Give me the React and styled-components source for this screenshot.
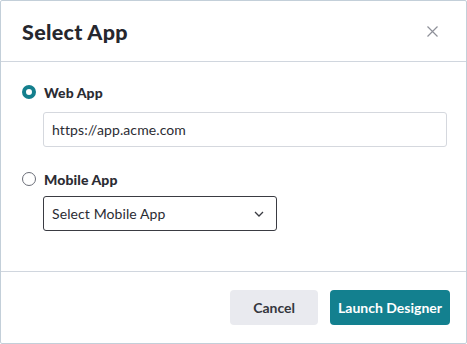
import React from "react";
import styled, { createGlobalStyle } from "styled-components";

const Global = createGlobalStyle`
  html, body { margin: 0; padding: 0; background: #fff; }
  body { font-family: Lato, "Open Sans", Arial, sans-serif; color: #2b2c33; }
  * { box-sizing: border-box; }
`;

const Modal = styled.div`
  width: 467px;
  height: 344px;
  border: 1px solid #c3cfd9;
  border-radius: 2px;
  background: #fff;
  display: flex;
  flex-direction: column;
`;

const Header = styled.div`
  height: 61px;
  display: flex;
  align-items: center;
  justify-content: space-between;
  padding: 0 28px 0 21px;
  border-bottom: 1px solid #d0d6de;
  flex-shrink: 0;
`;

const Title = styled.h1`
  margin: 0;
  font-size: 21.5px;
  font-weight: 900;
  color: #26272e;
  letter-spacing: 0.3px;
  padding-top: 1px;
`;

const CloseBtn = styled.button`
  border: 0;
  background: none;
  padding: 0;
  width: 11px;
  height: 11px;
  display: flex;
  cursor: pointer;
`;

const Body = styled.div`
  flex: 1;
  padding: 21px 20px 0 21px;
  display: flex;
  flex-direction: column;
`;

const Option = styled.div`
  display: flex;
  flex-direction: column;
  margin-bottom: ${(p) => p.$mb || 0}px;
`;

const RadioRow = styled.label`
  display: flex;
  align-items: center;
  gap: 8px;
  height: 18px;
  cursor: pointer;
`;

const Radio = styled.span`
  width: 14px;
  height: 14px;
  border-radius: 50%;
  flex-shrink: 0;
  border: ${(p) => (p.$checked ? "4px solid #147f8d" : "1px solid #6b6e78")};
  background: #fff;
`;

const Label = styled.span`
  font-size: 14px;
  font-weight: 900;
  letter-spacing: 0.1px;
  color: #2b2c33;
`;

const Field = styled.div`
  margin: ${(p) => p.$mt}px 0 0 21px;
  height: 35px;
  width: ${(p) => p.$w};
  border: 1px solid ${(p) => p.$border};
  border-radius: 3px;
  display: flex;
  align-items: center;
  justify-content: space-between;
  padding: 0 12px 0 8px;
  font-size: 14px;
  letter-spacing: 0.1px;
  color: #2b2c33;
`;

const Footer = styled.div`
  height: 72px;
  border-top: 1px solid #d0d6de;
  display: flex;
  justify-content: flex-end;
  align-items: flex-start;
  padding: 18px 16px 0 0;
  gap: 12px;
  flex-shrink: 0;
`;

const Button = styled.button`
  height: 35px;
  border: 0;
  border-radius: 4px;
  padding: 0 ${(p) => p.$px}px;
  font-family: inherit;
  font-size: 14px;
  font-weight: 700;
  background: ${(p) => (p.$primary ? "#13808f" : "#e9eaef")};
  color: ${(p) => (p.$primary ? "#fff" : "#35363d")};
  cursor: pointer;
`;

export default function App() {
  return (
    <>
      <Global />
      <Modal>
        <Header>
          <Title>Select App</Title>
          <CloseBtn aria-label="Close">
            <svg width="11" height="11" viewBox="0 0 11 11">
              <path d="M0.5 0.5L10.5 10.5M10.5 0.5L0.5 10.5" stroke="#8e9099" strokeWidth="1.2" />
            </svg>
          </CloseBtn>
        </Header>
        <Body>
          <Option $mb={23}>
            <RadioRow>
              <Radio $checked />
              <Label>Web App</Label>
            </RadioRow>
            <Field $mt={11} $w="404px" $border="#d5d8de">https://app.acme.com</Field>
          </Option>
          <Option>
            <RadioRow>
              <Radio />
              <Label>Mobile App</Label>
            </RadioRow>
            <Field $mt={8} $w="234px" $border="#3a3b42">
              <span>Select Mobile App</span>
              <svg width="10" height="6" viewBox="0 0 10 6">
                <path d="M1 1L5 5L9 1" fill="none" stroke="#3a3b42" strokeWidth="1.3" />
              </svg>
            </Field>
          </Option>
        </Body>
        <Footer>
          <Button $px={23}>Cancel</Button>
          <Button $px={8} $primary>Launch Designer</Button>
        </Footer>
      </Modal>
    </>
  );
}
